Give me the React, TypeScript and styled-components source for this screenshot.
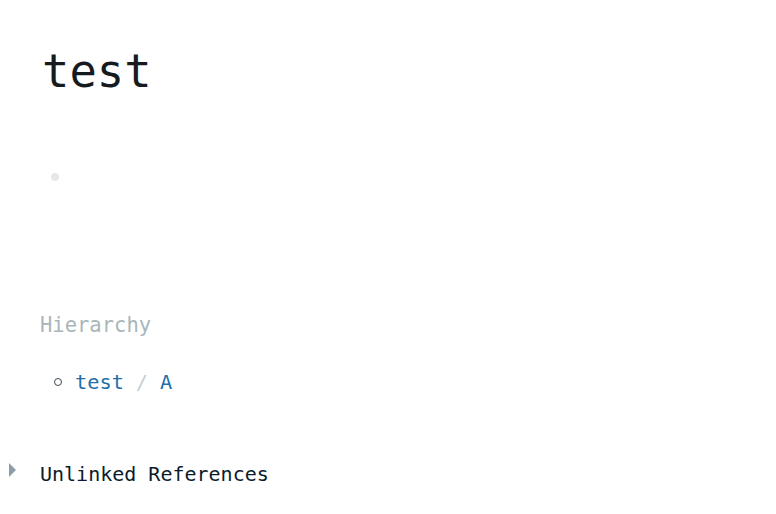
import styled, { createGlobalStyle } from 'styled-components'

const GlobalStyle = createGlobalStyle`
  html, body {
    margin: 0;
    padding: 0;
    background: #ffffff;
  }
  body {
    font-family: "DejaVu Sans Mono", "Liberation Mono", monospace;
  }
`

const Page = styled.div`
  display: flex;
  flex-direction: column;
  padding: 40px 0 0 40px;
`

const Title = styled.h1`
  margin: 0 0 0 2px;
  font-size: 45.5px;
  font-weight: 400;
  line-height: 64px;
  color: #161b1f;
`

const Block = styled.div`
  display: flex;
  align-items: center;
  height: 30px;
  margin-top: 58px;
`

const Dot = styled.span`
  width: 8px;
  height: 8px;
  margin-left: 11px;
  border-radius: 50%;
  background: #e5e8eb;
`

const Section = styled.div`
  display: flex;
  flex-direction: column;
  margin-top: 119px;
`

const SectionTitle = styled.div`
  font-size: 20.5px;
  line-height: 28px;
  color: #a8b6b9;
`

const Crumbs = styled.ul`
  display: flex;
  align-items: center;
  list-style: none;
  margin: 29px 0 0 0;
  padding: 0 0 0 14px;
  font-size: 20.3px;
  line-height: 28px;
`

const Circle = styled.span`
  box-sizing: border-box;
  width: 8px;
  height: 8px;
  border: 1.3px solid #3a4a55;
  border-radius: 50%;
  margin-right: 13px;
`

const Crumb = styled.a`
  color: #1f6fa8;
  text-decoration: none;
`

const Sep = styled.span`
  color: #c6cfd3;
  margin: 0 12px;
`

const Refs = styled.div`
  display: flex;
  align-items: center;
  margin: 64px 0 0 -40px;
  font-size: 20px;
  line-height: 28px;
  color: #0b1b2b;
`

const Arrow = styled.span`
  width: 0;
  height: 0;
  margin: 0 24px 8px 9px;
  border-top: 7px solid transparent;
  border-bottom: 7px solid transparent;
  border-left: 7px solid #8f9ea6;
`

export default function App() {
  return (
    <>
      <GlobalStyle />
      <Page>
        <Title>test</Title>
        <Block>
          <Dot />
        </Block>
        <Section>
          <SectionTitle>Hierarchy</SectionTitle>
          <Crumbs>
            <Circle />
            <Crumb href="#">test</Crumb>
            <Sep>/</Sep>
            <Crumb href="#">A</Crumb>
          </Crumbs>
        </Section>
        <Refs>
          <Arrow />
          Unlinked References
        </Refs>
      </Page>
    </>
  )
}
